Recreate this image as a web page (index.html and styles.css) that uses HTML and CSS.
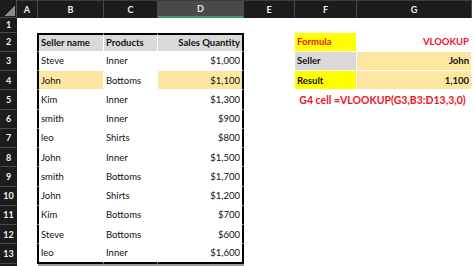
FILE: index.html
```html
<!DOCTYPE html>
<html>
<head>
<meta charset="utf-8">
<link rel="stylesheet" href="styles.css">
</head>
<body>
<div class="sheet">
  <div class="corner"><span class="tri"></span></div>
  <div class="ch">A</div><div class="ch">B</div><div class="ch">C</div><div class="ch sel">D</div><div class="ch">E</div><div class="ch">F</div><div class="ch">G</div>

  <div class="rh">1</div><div></div><div></div><div></div><div></div><div></div><div></div><div></div>

  <div class="rh">2</div><div></div><div class="c hd ft fl">Seller name</div><div class="c hd ft">Products</div><div class="c hd r ft fr">Sales Quantity</div><div></div><div class="c b red yel">Formula</div><div class="c b r red">VLOOKUP</div>

  <div class="rh">3</div><div></div><div class="c fl">Steve</div><div class="c">Inner</div><div class="c r fr">$1,000</div><div></div><div class="c b gry">Seller</div><div class="c b r org">John</div>

  <div class="rh">4</div><div></div><div class="c org fl">John</div><div class="c">Bottoms</div><div class="c r org fr">$1,100</div><div></div><div class="c b yel">Result</div><div class="c b r org">1,100</div>

  <div class="rh">5</div><div></div><div class="c fl">Kim</div><div class="c">Inner</div><div class="c r fr">$1,300</div><div></div><div class="note">G4 cell =VLOOKUP(G3,B3:D13,3,0)</div>

  <div class="rh">6</div><div></div><div class="c fl">smith</div><div class="c">Inner</div><div class="c r fr">$900</div><div></div><div></div><div></div>

  <div class="rh">7</div><div></div><div class="c fl">leo</div><div class="c">Shirts</div><div class="c r fr">$800</div><div></div><div></div><div></div>

  <div class="rh">8</div><div></div><div class="c fl">John</div><div class="c">Inner</div><div class="c r fr">$1,500</div><div></div><div></div><div></div>

  <div class="rh">9</div><div></div><div class="c fl">smith</div><div class="c">Bottoms</div><div class="c r fr">$1,700</div><div></div><div></div><div></div>

  <div class="rh">10</div><div></div><div class="c fl">John</div><div class="c">Shirts</div><div class="c r fr">$1,200</div><div></div><div></div><div></div>

  <div class="rh">11</div><div></div><div class="c fl">Kim</div><div class="c">Bottoms</div><div class="c r fr">$700</div><div></div><div></div><div></div>

  <div class="rh">12</div><div></div><div class="c fl">Steve</div><div class="c">Bottoms</div><div class="c r fr">$600</div><div></div><div></div><div></div>

  <div class="rh">13</div><div></div><div class="c fl fb">leo</div><div class="c fb">Inner</div><div class="c r fr fb">$1,600</div><div></div><div></div><div></div>

  <div class="rh"></div><div></div><div class="shade"></div><div class="shade"></div><div class="shade"></div>
</div>
</body>
</html>
```

FILE: styles.css
```css
html, body {
  margin: 0;
  padding: 0;
  background: #fff;
}
body {
  width: 474px;
  height: 266px;
  overflow: hidden;
  font-family: Lato, "Liberation Sans", sans-serif;
  font-size: 9.5px;
  color: #111;
}
.sheet {
  display: grid;
  grid-template-columns: 17px 21px 66px 54px 86px 51px 62px 115px;
  grid-template-rows: 18px 14.5px repeat(12, 19.25px) 10px;
}
.corner {
  background: #1c1c1c;
  border-right: 1px solid #4a4a4a;
  border-bottom: 1px solid #4a4a4a;
  box-sizing: border-box;
  display: flex;
  justify-content: flex-end;
  align-items: flex-end;
  padding: 0 1px 1px 0;
}
.tri {
  width: 10px;
  height: 10px;
  background: linear-gradient(to bottom right, transparent 50%, #8a8a8a 50%);
}
.ch {
  background: #1c1c1c;
  color: #f2f2f2;
  font-weight: 700;
  font-size: 9px;
  display: flex;
  align-items: center;
  justify-content: center;
  border-right: 1px solid #4a4a4a;
  border-top: 1px solid #3c3c3c;
  box-sizing: border-box;
}
.ch.sel {
  background: #4a4a4a;
  border-bottom: 2px solid #3f9a6a;
  color: #e6e6e6;
}
.rh {
  background: #1c1c1c;
  color: #f2f2f2;
  font-weight: 700;
  font-size: 9px;
  display: flex;
  align-items: center;
  justify-content: center;
  border-bottom: 1px solid #4a4a4a;
  box-sizing: border-box;
}
.c {
  display: flex;
  align-items: center;
  padding: 0 2px;
  border-right: 1.5px solid #fff;
  border-bottom: 1px solid #fff;
  box-sizing: border-box;
  white-space: nowrap;
  overflow: hidden;
}
.c.r {
  justify-content: flex-end;
}
.fl { border-left: 2.5px solid #000; margin-left: -1px; }
.ft { border-top: 2.5px solid #000; }
.fr { border-right: 2.5px solid #000; }
.fb { border-bottom: 2.5px solid #000; }
.shade {
  border-top: 3px solid #9a9a9a;
}
.hd {
  background: #d9d9d9;
  font-weight: 700;
}
.b { font-weight: 700; }
.red { color: #f0141e; }
.yel { background: #ffff00; }
.gry { background: #d9d9d9; }
.org { background: #fde69f; }
.note {
  grid-column: 7 / 9;
  display: flex;
  align-items: center;
  justify-content: center;
  color: #f0141e;
  font-weight: 700;
  font-size: 10.5px;
  white-space: nowrap;
  padding-right: 2px;
}
```
